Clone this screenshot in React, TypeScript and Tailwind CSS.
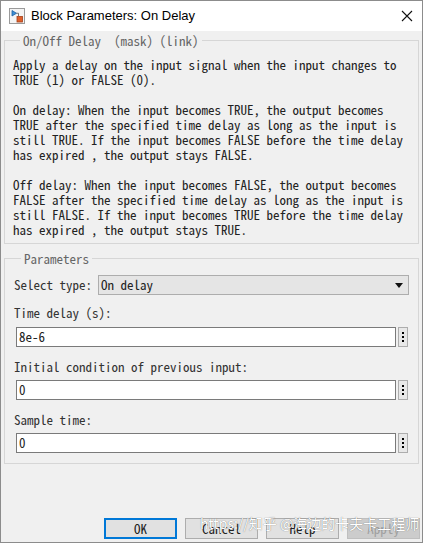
import React from "react";

const mono = { fontFamily: '"Noto Sans Mono CJK SC", "Liberation Mono", monospace' };

function TitleIcon() {
  return (
    <svg width="16" height="16" viewBox="0 0 16 16">
      <rect x="0.5" y="0.5" width="15" height="15" fill="#f4f4f4" stroke="#9a9a9a" />
      <path d="M3 2.5 L3 8 L7.5 5.25 Z" fill="#3d8fd6" stroke="#1d5fa0" strokeWidth="0.8" />
      <path d="M7.5 5.25 H9.5 V8" fill="none" stroke="#555" strokeWidth="0.8" />
      <rect x="8" y="8.5" width="5.5" height="5.5" fill="#e0602a" stroke="#a3401a" strokeWidth="0.8" />
    </svg>
  );
}

function Ellipsis() {
  return (
    <div className="w-[10px] h-[20px] ml-[2px] border border-[#adadad] bg-[#e8e8e8] flex flex-col items-center justify-center gap-[2px]">
      <div className="w-[2px] h-[2px] bg-black" />
      <div className="w-[2px] h-[2px] bg-black" />
      <div className="w-[2px] h-[2px] bg-black" />
    </div>
  );
}

function Field({ value }: { value: string }) {
  return (
    <div className="flex items-center ml-[2px]">
      <div
        className="w-[380px] h-[20px] border border-[#7a7a7a] bg-white pl-[2px] text-[13px] leading-[18px] text-[#222]"
        style={mono}
      >
        {value}
      </div>
      <Ellipsis />
    </div>
  );
}

function Btn({ label, primary, disabled }: { label: string; primary?: boolean; disabled?: boolean }) {
  return (
    <div
      className={
        "w-[73px] h-[21px] flex items-center justify-center text-[13px] " +
        (primary
          ? "border-2 border-[#0078d7] bg-[#e1e1e1] text-[#222]"
          : disabled
          ? "border border-[#bfbfbf] bg-[#cccccc] text-[#a0a0a0]"
          : "border border-[#adadad] bg-[#e1e1e1] text-[#222]")
      }
      style={mono}
    >
      {label}
    </div>
  );
}

export default function App() {
  const desc = [
    "Apply a delay on the input signal when the input changes to",
    "TRUE (1) or FALSE (0).",
    "",
    "On delay: When the input becomes TRUE, the output becomes",
    "TRUE after the specified time delay as long as the input is",
    "still TRUE. If the input becomes FALSE before the time delay",
    "has expired , the output stays FALSE.",
    "",
    "Off delay: When the input becomes FALSE, the output becomes",
    "FALSE after the specified time delay as long as the input is",
    "still FALSE. If the input becomes TRUE before the time delay",
    "has expired , the output stays TRUE.",
  ];
  return (
    <div className="relative w-[424px] h-[544px] bg-white overflow-hidden">
      <div className="w-[423px] h-[543px] border border-[#8c8c8c] flex flex-col bg-[#f0f0f0]">
        {/* Title bar */}
        <div className="h-[30px] bg-white flex items-center pl-[8px] pr-[9px] shrink-0">
          <TitleIcon />
          <div
            className="ml-[6px] text-[13px] text-black"
            style={{ fontFamily: '"Liberation Sans", Arial, sans-serif' }}
          >
            Block Parameters: On Delay
          </div>
          <div className="ml-auto">
            <svg width="12" height="12" viewBox="0 0 12 12">
              <path d="M1 1 L11 11 M11 1 L1 11" stroke="#111" strokeWidth="1.1" />
            </svg>
          </div>
        </div>

        {/* Description group */}
        <fieldset className="mx-[3px] mt-[2px] border border-[#d6d6d6] pl-[8px] pr-[4px] pt-[9px] pb-[6px]">
          <legend
            className="ml-[7px] px-[3px] text-[13px] leading-[15px] text-[#666] whitespace-pre"
            style={mono}
          >
            On/Off Delay  (mask) (link)
          </legend>
          <div className="text-[13px] leading-[15px] text-[#222] whitespace-pre" style={mono}>
            {desc.map((l, i) => (
              <div key={i} className="h-[15px]">
                {l}
              </div>
            ))}
          </div>
        </fieldset>

        {/* Parameters group */}
        <fieldset className="mx-[3px] mt-[7px] border border-[#d6d6d6] pl-[9px] pr-[9px] pt-[9px] pb-[10px]">
          <legend className="ml-[7px] px-[3px] text-[13px] leading-[15px] text-[#666]" style={mono}>
            Parameters
          </legend>
          <div className="flex items-center h-[20px]">
            <div className="w-[84px] text-[13px] text-[#333]" style={mono}>
              Select type:
            </div>
            <div
              className="flex-1 h-[20px] border border-[#adadad] bg-[#e5e5e5] flex items-center pl-[2px] pr-[5px] text-[13px] text-[#222]"
              style={mono}
            >
              On delay
              <svg className="ml-auto" width="8" height="5" viewBox="0 0 8 5">
                <path d="M0 0 H8 L4 5 Z" fill="#111" />
              </svg>
            </div>
          </div>
          <div className="mt-[10px] h-[16px] leading-[16px] text-[13px] text-[#333]" style={mono}>
            Time delay (s):
          </div>
          <div className="mt-[6px]">
            <Field value="8e-6" />
          </div>
          <div className="mt-[12px] h-[16px] leading-[16px] text-[13px] text-[#333]" style={mono}>
            Initial condition of previous input:
          </div>
          <div className="mt-[5px]">
            <Field value="0" />
          </div>
          <div className="mt-[12px] h-[16px] leading-[16px] text-[13px] text-[#333]" style={mono}>
            Sample time:
          </div>
          <div className="mt-[5px]">
            <Field value="0" />
          </div>
        </fieldset>

        {/* Buttons */}
        <div className="mt-auto mb-[3px] flex justify-end gap-[8px] pr-[2px]">
          <Btn label="OK" primary />
          <Btn label="Cancel" />
          <Btn label="Help" />
          <Btn label="Apply" disabled />
        </div>
      </div>
      <div
        className="absolute left-[200px] top-[514px] text-[14px] leading-[18px] text-white whitespace-nowrap [text-shadow:0_0_1px_rgba(0,0,0,0.6)]"
        style={{ fontFamily: '"Noto Sans CJK SC", "Noto Sans", sans-serif' }}
      >
        https://知乎 @海边的卡夫卡工程师
      </div>
    </div>
  );
}
